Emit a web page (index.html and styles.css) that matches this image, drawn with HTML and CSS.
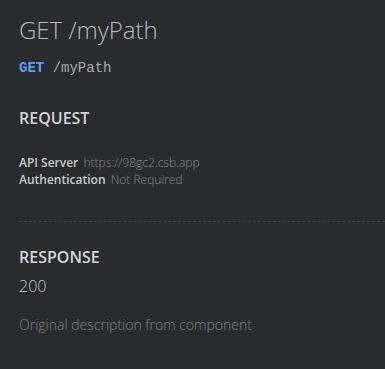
FILE: index.html
```html
<!DOCTYPE html>
<html>
<head>
<link rel="stylesheet" href="styles.css">
</head>
<body>
<div class="operation">
  <h1 class="op-title">GET /myPath</h1>
  <div class="op-path"><span class="verb">GET</span> <span class="path">/myPath</span></div>

  <h3 class="section-title">REQUEST</h3>
  <div class="props">
    <div class="prop"><span class="prop-name">API Server</span> <span class="prop-value">https://98gc2.csb.app</span></div>
    <div class="prop"><span class="prop-name">Authentication</span> <span class="prop-value">Not Required</span></div>
  </div>

  <hr class="divider">

  <h3 class="section-title response">RESPONSE</h3>
  <div class="status">200</div>
  <p class="description">Original description from component</p>
</div>
</body>
</html>
```

FILE: styles.css
```css
body {
    margin: 0;
    background-color: #2a2b2e;
    font-family: 'Open Sans', sans-serif;
    color: #a7a9ac;
}
.operation {
    padding: 14px 0 0 19px;
}
.op-title {
    margin: 0;
    font-size: 24px;
    font-weight: 300;
    line-height: 32px;
    color: #b8babd;
}
.op-path {
    margin-top: 13px;
    font-family: 'Liberation Mono', monospace;
    font-size: 14px;
    line-height: 18px;
}
.verb {
    color: #5e9ff0;
    font-weight: bold;
}
.path {
    color: #a7a9ac;
}
.section-title {
    margin: 31px 0 0 0;
    font-size: 16px;
    font-weight: 600;
    line-height: 20px;
    color: #d3d5d7;
}
.section-title.response {
    margin-top: 25px;
}
.props {
    margin-top: 26px;
    font-size: 12px;
    line-height: 17px;
}
.prop-name {
    font-weight: 600;
    color: #c7c9cc;
    margin-right: 2px;
}
.prop-value {
    font-weight: 350;
    color: #85878b;
}
.divider {
    margin: 33px 0 0 0;
    border: 0;
    border-top: 1px dashed #44464a;
}
.status {
    margin-top: 9px;
    font-size: 16px;
    font-weight: 300;
    line-height: 20px;
    color: #c7c9cc;
}
.description {
    margin: 20px 0 0 0;
    font-size: 14px;
    font-weight: 300;
    line-height: 18px;
    color: #7d7f83;
}
```
